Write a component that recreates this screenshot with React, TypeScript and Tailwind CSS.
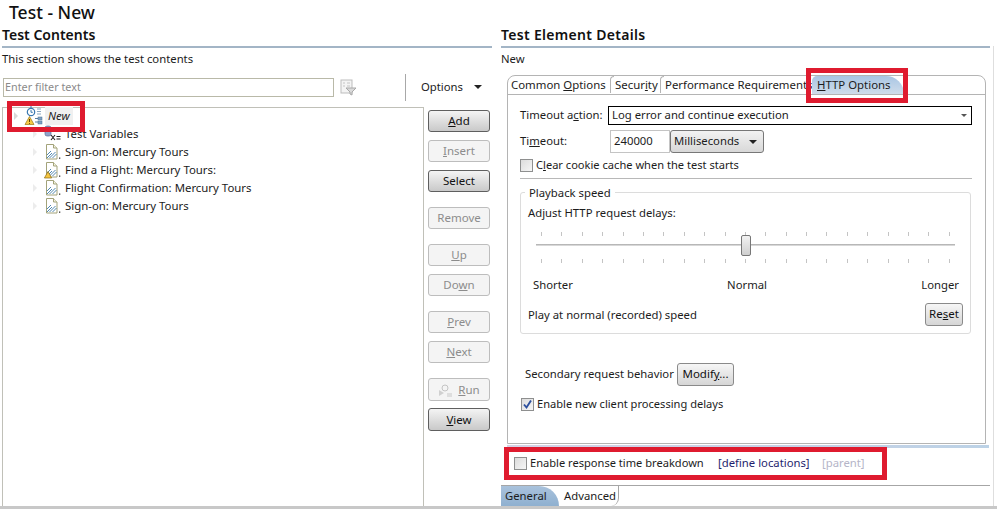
import React from "react";

const FONT = "[font-family:'Noto_Sans','Open_Sans',sans-serif]";

function Btn({ children, off, dark, className = "" }: { children: React.ReactNode; off?: boolean; dark?: boolean; className?: string }) {
  const tone = off
    ? "border-[#bdbdbd] bg-[#f4f4f4] text-[#8c8c8c]"
    : dark
      ? "border-[#5f5f5f] bg-gradient-to-b from-[#f4f4f4] to-[#c9c9c9] text-[#111]"
      : "border-[#8a8a8a] bg-gradient-to-b from-[#f6f6f6] to-[#d6d6d6] text-[#111]";
  return (
    <div className={`flex items-center justify-center rounded-[3px] border text-[11.5px] leading-none ${tone} ${className}`}>
      {children}
    </div>
  );
}

function PageIcon({ warn }: { warn?: boolean }) {
  return (
    <svg width="18" height="18" viewBox="0 0 18 18" className="shrink-0">
      <path d="M2.5 1.5h7l3.5 3.5v11h-10.500z" fill="#fff" stroke="#a3a37a" />
      <path d="M9.500 1.500v3.500h3.500" fill="#f3f3e0" stroke="#a3a37a" />
      <path d="M3 15l5-5M5.500 15l6-6M8.500 15l4-4M3 12l4-4" stroke="#3d7aa8" strokeWidth="0.900" />
      <rect x="15" y="14.500" width="1.300" height="1.300" fill="#333" />
      {warn && <path d="M4 10.500l3.600 6.500h-7.200z" fill="#f5c542" stroke="#8a6a10" strokeWidth="0.700" />}
    </svg>
  );
}

function RootIcon() {
  return (
    <svg width="20" height="20" viewBox="0 0 20 20" className="shrink-0">
      <circle cx="7" cy="6" r="3.700" fill="#fff" stroke="#3a78b0" strokeWidth="1.200" />
      <path d="M7 4v2.300h1.800" stroke="#3a78b0" fill="none" />
      <path d="M6 1h2" stroke="#3a78b0" />
      <path d="M13 3h4M13 5.500h4M13 8h4" stroke="#8aa7c0" strokeWidth="1.200" />
      <path d="M11 12.500h3M11 16h3" stroke="#5a7fa3" />
      <rect x="14" y="11" width="4" height="3" fill="#7fa3c4" stroke="#4a6f94" strokeWidth="0.500" />
      <rect x="14" y="15" width="4" height="3" fill="#7fa3c4" stroke="#4a6f94" strokeWidth="0.500" />
      <path d="M5.500 10.500l4.500 8h-9z" fill="#f6c945" stroke="#9a7414" strokeWidth="0.700" />
      <path d="M5.500 13v3M5.500 17v0.800" stroke="#5a3d00" />
    </svg>
  );
}

function VarIcon() {
  return (
    <svg width="18" height="18" viewBox="0 0 18 18" className="shrink-0">
      <rect x="1" y="1" width="6" height="10" rx="2" fill="#8fa3c8" stroke="#5d7099" strokeWidth="0.700" />
      <path d="M7 10l4 5M11 10l-4 5" stroke="#222" strokeWidth="1.100" />
      <path d="M12.500 11.500h4M12.500 14h4" stroke="#222" strokeWidth="1.100" />
    </svg>
  );
}

function FilterIcon() {
  return (
    <svg width="17" height="17" viewBox="0 0 17 17">
      <rect x="1" y="1" width="11" height="13" fill="#f4f4f4" stroke="#bdbdbd" />
      <path d="M3 4h2M7 4h3M3 7h2M7 7h3" stroke="#c4c4c4" />
      <path d="M6 9h10l-4 4v3l-2-1v-2z" fill="#dadada" stroke="#a8a8a8" />
    </svg>
  );
}

function Check({ on }: { on?: boolean }) {
  return (
    <span className="flex h-[13px] w-[13px] shrink-0 items-center justify-center border border-[#8e8f8f] bg-gradient-to-br from-[#dcdcdc] to-[#f6f6f6]">
      {on && (
        <svg width="11" height="11" viewBox="0 0 11 11">
          <path d="M2 5.500l2.500 3 4.500-7" fill="none" stroke="#2c4f9e" strokeWidth="1.900" />
        </svg>
      )}
    </span>
  );
}

function TreeRow({ icon, label }: { icon: React.ReactNode; label: string }) {
  return (
    <div className="flex h-[18px] items-center text-[11.4px] text-[#1c1c1c]">
      <span className="ml-[30px] mr-[7px] h-0 w-0 border-y-[4px] border-l-[4px] border-y-transparent border-l-[#ececec]" />
      {icon}
      <span className="ml-[3px] whitespace-nowrap">{label}</span>
    </div>
  );
}

function Ticks() {
  return (
    <div className="flex justify-between">
      {Array.from({ length: 21 }).map((_, i) => (
        <span key={i} className="h-[4px] w-px bg-[#c4c4c4]" />
      ))}
    </div>
  );
}

function Heading({ children, className = "" }: { children: React.ReactNode; className?: string }) {
  return (
    <div className={`box-content h-[18px] border-b-2 border-[#a3b5c6] pb-[1px] pt-[1px] text-[14px] font-semibold leading-[15px] text-[#111] ${className}`}>
      {children}
    </div>
  );
}

export default function App() {
  return (
    <div className={`relative h-[509px] w-[997px] overflow-hidden bg-white ${FONT} text-[11.3px] text-[#1c1c1c]`}>
      <div className="h-[26px] pl-[9px] pt-[1px] text-[17.5px] font-medium leading-[22px] text-[#111]">Test - New</div>

      <div className="flex h-[480px]">
        {/* Left column */}
        <div className="ml-[2px] flex w-[490px] flex-col">
          <Heading>Test Contents</Heading>
          <div className="mt-[2px] h-[18px] leading-[18px]">This section shows the test contents</div>
          <div className="mt-[5px] flex h-[28px] items-center">
            <div className="ml-[1px] flex h-[19px] w-[331px] items-center border border-[#b9b9a8] pl-[1px] text-[10.8px] text-[#8a8a8a]">Enter filter text</div>
            <span className="ml-[6px] flex"><FilterIcon /></span>
            <span className="ml-[48px] h-[27px] w-px bg-[#a8a8a8]" />
            <span className="ml-[15px] w-[42px]">Options</span>
            <span className="ml-[11px] h-0 w-0 border-x-[4px] border-t-[4px] border-x-transparent border-t-[#222]" />
          </div>
          <div className="mt-[6px] flex flex-1">
            <div className="h-full w-[422px] border-x border-t border-[#c0c0b8]">
              <div className="mt-[-1px] flex h-[18px] items-center">
                <span className="ml-[11px] mr-[6px] h-0 w-0 border-y-[4px] border-l-[4px] border-y-transparent border-l-[#d8d8d8]" />
                <RootIcon />
                <span className="ml-[1px] flex h-[18px] items-center bg-[#f0f0f0] px-[3px] text-[11.4px] italic text-[#222]">New</span>
              </div>
              <TreeRow icon={<VarIcon />} label="Test Variables" />
              <TreeRow icon={<PageIcon />} label="Sign-on: Mercury Tours" />
              <TreeRow icon={<PageIcon warn />} label="Find a Flight: Mercury Tours:" />
              <TreeRow icon={<PageIcon />} label="Flight Confirmation: Mercury Tours" />
              <TreeRow icon={<PageIcon />} label="Sign-on: Mercury Tours" />
            </div>
            <div className="ml-[4px] flex w-[62px] flex-col pt-[3px]">
              <Btn dark className="h-[22px]"><span><u>A</u>dd</span></Btn>
              <Btn off className="mt-[8px] h-[22px]"><span><u>I</u>nsert</span></Btn>
              <Btn dark className="mt-[8px] h-[22px]">Select</Btn>
              <Btn off className="mt-[15px] h-[22px]">Remove</Btn>
              <Btn off className="mt-[15px] h-[22px]"><span><u>U</u>p</span></Btn>
              <Btn off className="mt-[8px] h-[22px]"><span>Do<u>w</u>n</span></Btn>
              <Btn off className="mt-[15px] h-[22px]"><span><u>P</u>rev</span></Btn>
              <Btn off className="mt-[8px] h-[22px]"><span><u>N</u>ext</span></Btn>
              <Btn off className="mt-[15px] h-[23px] gap-[5px]">
                <svg width="15" height="15" viewBox="0 0 15 15"><circle cx="7" cy="6" r="3" fill="none" stroke="#c4c4c4" /><path d="M1 8l5 3-5 3z" fill="#d0d0d0" /><path d="M9 12h5M9 14h5" stroke="#c8c8c8" /></svg>
                <span><u>R</u>un</span>
              </Btn>
              <Btn dark className="mt-[7px] h-[23px]"><span><u>V</u>iew</span></Btn>
            </div>
          </div>
        </div>

        {/* Right column */}
        <div className="ml-[9px] flex w-[489px] flex-col">
          <Heading className="tracking-[0.3px]">Test Element Details</Heading>
          <div className="mt-[2px] h-[18px] leading-[18px]">New</div>
          <div className="ml-[6px] mt-[7px] flex h-[369px] w-[479px] flex-col rounded-t-[8px] border border-[#b4b4b4]">
            {/* Tabs */}
            <div className="box-content flex h-[18px] items-center border-b border-[#b4b4b4] text-[11.4px]">
              <span className="ml-[3px] flex w-[104px] items-center justify-between whitespace-nowrap">
                <span>Common <u>O</u>ptions</span>
                <span className="mr-[1px] h-[17px] w-[4px] rounded-tl-[6px] border-l border-t border-[#b4b4b4]" />
              </span>
              <span className="flex w-[50px] items-center justify-between whitespace-nowrap">
                <span>Secur<u>i</u>ty</span>
                <span className="mr-[1px] h-[17px] w-[4px] rounded-tl-[6px] border-l border-t border-[#b4b4b4]" />
              </span>
              <span className="w-[147px] whitespace-nowrap">Performance Requirements</span>
              <span className="flex h-[18px] w-[92px] items-center rounded-tl-[5px] rounded-tr-[18px] bg-gradient-to-b from-[#a9c6e4] to-[#cfdcea] pl-[5px]">
                <span className="whitespace-nowrap"><u>H</u>TTP Options</span>
              </span>
            </div>

            <div className="flex flex-1 flex-col pl-[12px] pr-[11px]">
              <div className="mt-[11px] flex h-[19px] items-center pr-[2px]">
                <span className="w-[88px] whitespace-nowrap">Timeout a<u>c</u>tion:</span>
                <div className="flex h-[19px] flex-1 items-center justify-between border border-black pl-[3px] pr-[4px]">
                  <span>Log error and continue execution</span>
                  <span className="h-0 w-0 border-x-[3px] border-t-[3px] border-x-transparent border-t-[#555]" />
                </div>
              </div>
              <div className="mt-[5px] flex h-[23px] items-center">
                <span className="w-[90px]">Ti<u>m</u>eout:</span>
                <div className="flex h-[23px] w-[60px] items-center border border-[#c4c4c4] pl-[3px]">240000</div>
                <div className="flex h-[23px] w-[94px] items-center justify-between rounded-[3px] border border-[#777] bg-gradient-to-b from-[#f2f2f2] to-[#d8d8d8] pl-[3px] pr-[6px]">
                  <span>Milliseconds</span>
                  <span className="h-0 w-0 border-x-[4px] border-t-[4px] border-x-transparent border-t-[#222]" />
                </div>
              </div>
              <div className="mt-[5px] flex h-[15px] items-center gap-[3px]">
                <Check />
                <span className="whitespace-nowrap text-[11.1px]">C<u>l</u>ear cookie cache when the test starts</span>
              </div>
              <div className="mr-[2px] mt-[5px] h-px bg-[#b8b8b8]" />

              {/* Playback group */}
              <div className="relative mr-[3px] mt-[13px] h-[142px] rounded-[3px] border border-[#dcdcdc] px-[7px]">
                <span className="absolute left-[4px] top-[-8px] bg-white px-[4px] leading-[15px]">Playback speed</span>
                <div className="mt-[12px] h-[16px] leading-[16px]">Adjust HTTP request delays:</div>
                <div className="relative mt-[11px] h-[32px] px-[13px]">
                  <Ticks />
                  <div className="absolute left-[8px] right-[8px] top-[12px] h-[2px] bg-gradient-to-b from-[#a8a8a8] to-[#e8e8e8]" />
                  <div className="absolute left-[213px] top-[3px] h-[21px] w-[10px] rounded-[2px] border border-[#777] bg-gradient-to-b from-[#f2f2f2] to-[#cfcfcf]" />
                  <div className="mt-[23px]"><Ticks /></div>
                </div>
                <div className="mt-[13px] flex justify-between pl-[5px] pr-[4px] leading-[16px]">
                  <span>Shorter</span>
                  <span>Normal</span>
                  <span>Longer</span>
                </div>
                <div className="mt-[9px] flex h-[24px] items-center justify-between">
                  <span className="mt-[2px]">Play at normal (recorded) speed</span>
                  <Btn className="h-[23px] w-[38px]"><span>Re<u>s</u>et</span></Btn>
                </div>
              </div>

              <div className="ml-[5px] mt-[28px] flex h-[24px] items-center">
                <span className="w-[147px] whitespace-nowrap">Secondary request behavior</span>
                <Btn className="ml-[5px] h-[23px] w-[57px]"><span>Modif<u>y</u>...</span></Btn>
              </div>
              <div className="ml-[1px] mt-[11px] flex h-[15px] items-center gap-[3px]">
                <Check on />
                <span className="text-[11.1px]">Enable new client processing delays</span>
              </div>
            </div>
          </div>

          <div className="ml-[6px] mt-[1px] h-[3px] w-[482px] bg-gradient-to-r from-[#d5d3e6] to-[#bcd2e6]" />
          <div className="ml-[13px] mt-[6px] flex h-[18px] items-center">
            <Check />
            <span className="ml-[3px] w-[188px] whitespace-nowrap text-[11.1px]">Enable response time breakdown</span>
            <span className="w-[104px] whitespace-nowrap text-[#1f1f6e]">[define locations]</span>
            <span className="whitespace-nowrap text-[#b5b5c8]">[parent]</span>
          </div>
          <div className="mt-[13px] flex h-[21px] border-t border-[#a6a6a6]">
            <span className="flex w-[58px] items-center rounded-tr-[20px] bg-gradient-to-b from-[#a9c2dc] to-[#8fb0d0] pl-[4px]">General</span>
            <span className="ml-[5px] flex w-[55px] items-center rounded-br-[8px] border-r border-[#a6a6a6]">Advanced</span>
          </div>
        </div>
      </div>

      <div className="absolute bottom-0 left-0 h-[3px] w-full bg-[#c8c8c8]" />
      <div className="absolute right-[3px] top-[46px] h-[460px] w-px bg-[#dedede]" />

      {/* Red annotation boxes */}
      <div className="absolute left-[7px] top-[101px] h-[31px] w-[78px] border-[5px] border-[#df1b2f]" />
      <div className="absolute left-[806px] top-[68px] h-[35px] w-[102px] border-[5px] border-[#df1b2f]" />
      <div className="absolute left-[504px] top-[447px] h-[33px] w-[383px] border-[5px] border-[#df1b2f]" />
    </div>
  );
}
